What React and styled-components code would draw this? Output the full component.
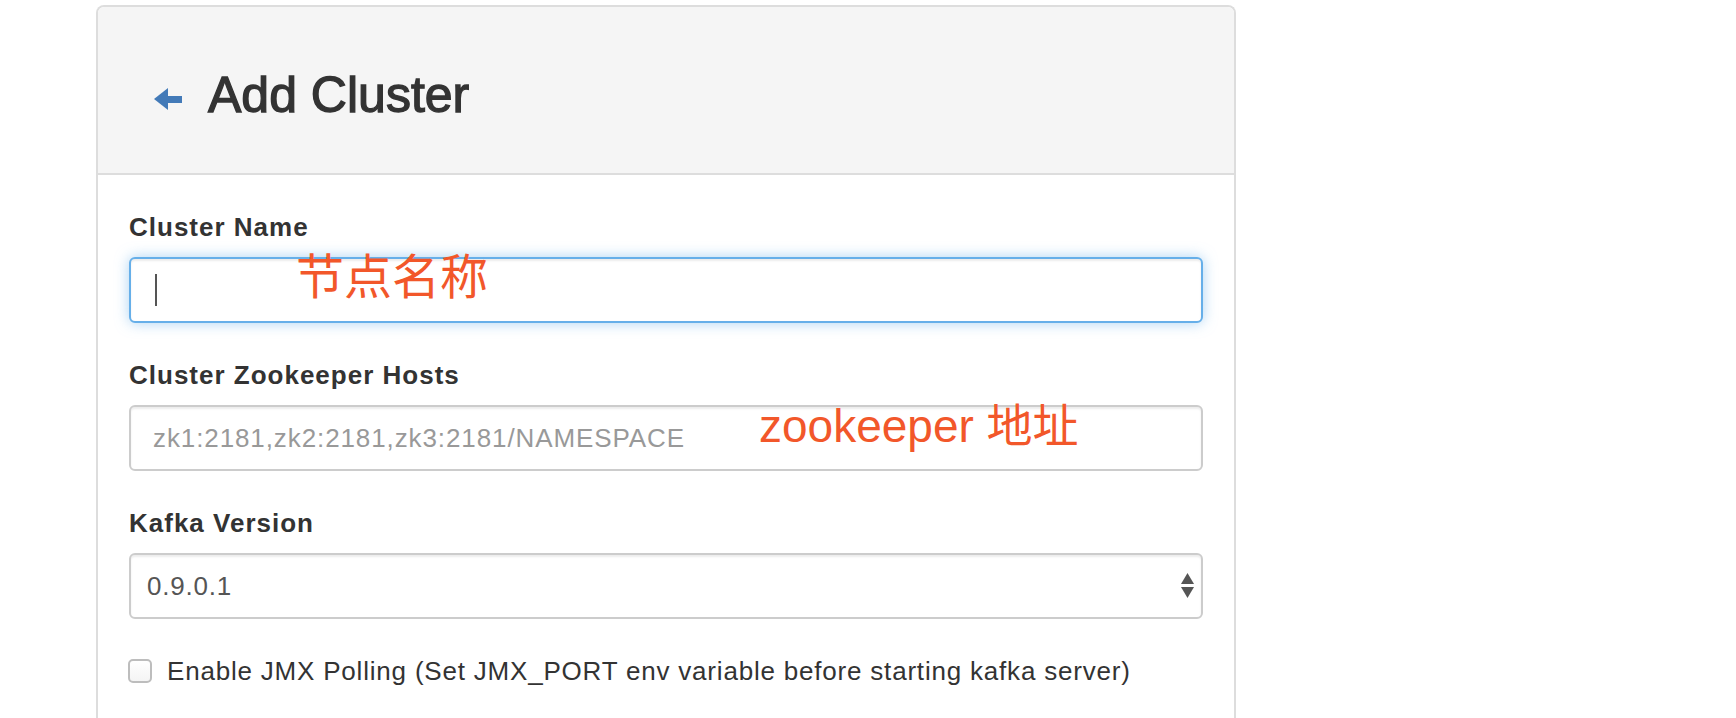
import React from 'react'
import styled, { createGlobalStyle } from 'styled-components'

const GlobalStyle = createGlobalStyle`
  html, body {
    margin: 0;
    padding: 0;
    background: #fff;
    overflow: hidden;
  }
  * {
    box-sizing: border-box;
  }
  body {
    font-family: "Liberation Sans", Arial, sans-serif;
    color: #333;
  }
`

const Page = styled.div`
  height: 718px;
  overflow: hidden;
  padding: 5px 0 0 96px;
`

const Panel = styled.div`
  width: 1140px;
  height: 713px;
  border: 2px solid #ddd;
  border-bottom: none;
  border-radius: 8px 8px 0 0;
  background: #fff;
`

const Header = styled.div`
  display: flex;
  align-items: center;
  gap: 26px;
  padding: 61px 56px 50px;
  background: #f5f5f5;
  border-bottom: 2px solid #ddd;
  border-radius: 6px 6px 0 0;
`

const BackLink = styled.a`
  display: flex;
  margin-top: 6px;
  color: #437ab8;
  cursor: pointer;
`

const Title = styled.h1`
  margin: 0;
  font-size: 50px;
  line-height: 55px;
  font-weight: 500;
  color: #333;
  -webkit-text-stroke: 1.3px #333;
`

const Body = styled.form`
  display: flex;
  flex-direction: column;
  gap: 34px;
  padding: 34px 31px 0;
`

const Group = styled.div`
  display: flex;
  flex-direction: column;
`

const Label = styled.label`
  font-size: 26px;
  line-height: 36px;
  font-weight: bold;
  letter-spacing: 1px;
  margin-bottom: 12px;
  color: #333;
`

const Field = styled.div`
  position: relative;
`

const TextInput = styled.input`
  display: block;
  width: 100%;
  height: 66px;
  padding: 0 22px;
  font-family: inherit;
  font-size: 26px;
  letter-spacing: 0.9px;
  color: #555;
  background: #fff;
  border: 2px solid ${p => (p.$focused ? '#66afe9' : '#ccc')};
  border-radius: 6px;
  outline: none;
  box-shadow: ${p =>
    p.$focused
      ? 'inset 0 2px 2px rgba(0,0,0,.075), 0 0 14px rgba(102,175,233,.55)'
      : 'inset 0 2px 2px rgba(0,0,0,.075)'};

  &::placeholder {
    color: #999;
  }
`

const Caret = styled.span`
  position: absolute;
  left: 26px;
  top: 17px;
  width: 2px;
  height: 32px;
  background: #555;
`

const Note = styled.span`
  position: absolute;
  left: ${p => p.$left}px;
  top: ${p => p.$top}px;
  font-family: "Liberation Sans", "Noto Sans CJK SC", sans-serif;
  font-size: ${p => p.$size}px;
  line-height: 1;
  color: #f2572a;
  white-space: nowrap;
  pointer-events: none;
`

const Select = styled.select`
  display: block;
  width: 100%;
  height: 66px;
  padding: 0 16px;
  font-family: inherit;
  font-size: 26px;
  letter-spacing: 0.8px;
  color: #555;
  background: #fff;
  border: 2px solid #ccc;
  border-radius: 6px;
  outline: none;
  appearance: none;
  box-shadow: inset 0 2px 2px rgba(0,0,0,.075);
`

const SelectArrows = styled.svg`
  position: absolute;
  right: 9px;
  top: 20px;
  pointer-events: none;
`

const CheckRow = styled.label`
  display: flex;
  align-items: center;
  gap: 15px;
  font-size: 26px;
  line-height: 36px;
  letter-spacing: 0.8px;
  color: #333;
`

const Checkbox = styled.input`
  appearance: none;
  margin: 0 0 0 -1px;
  width: 24px;
  height: 24px;
  border: 2px solid #bdbdbd;
  border-radius: 5px;
  background: linear-gradient(#fff, #f4f4f4);
`

const versions = ['0.8.1.1', '0.8.2.0', '0.8.2.1', '0.8.2.2', '0.9.0.0', '0.9.0.1']

export default function App() {
  return (
    <Page>
      <GlobalStyle />
      <Panel>
        <Header>
          <BackLink>
            <svg width="28" height="22" viewBox="0 0 28 22">
              <polygon points="0,11 14,0 14,22" fill="currentColor" />
              <rect x="13" y="8" width="15" height="7" fill="currentColor" />
            </svg>
          </BackLink>
          <Title>Add Cluster</Title>
        </Header>
        <Body onSubmit={e => e.preventDefault()}>
          <Group>
            <Label htmlFor="name">Cluster Name</Label>
            <Field>
              <TextInput id="name" $focused />
              <Caret />
              <Note $left={167} $top={-3} $size={48}>节点名称</Note>
            </Field>
          </Group>
          <Group>
            <Label htmlFor="zk">Cluster Zookeeper Hosts</Label>
            <Field>
              <TextInput id="zk" placeholder="zk1:2181,zk2:2181,zk3:2181/NAMESPACE" />
              <Note $left={630} $top={-2} $size={46}>zookeeper 地址</Note>
            </Field>
          </Group>
          <Group>
            <Label htmlFor="version">Kafka Version</Label>
            <Field>
              <Select id="version" defaultValue="0.9.0.1">
                {versions.map(v => (
                  <option key={v} value={v}>{v}</option>
                ))}
              </Select>
              <SelectArrows width="13" height="25" viewBox="0 0 13 25">
                <polygon points="6.5,0 13,11 0,11" fill="#555" />
                <polygon points="0,14 13,14 6.5,25" fill="#555" />
              </SelectArrows>
            </Field>
          </Group>
          <CheckRow>
            <Checkbox type="checkbox" />
            Enable JMX Polling (Set JMX_PORT env variable before starting kafka server)
          </CheckRow>
        </Body>
      </Panel>
    </Page>
  )
}
